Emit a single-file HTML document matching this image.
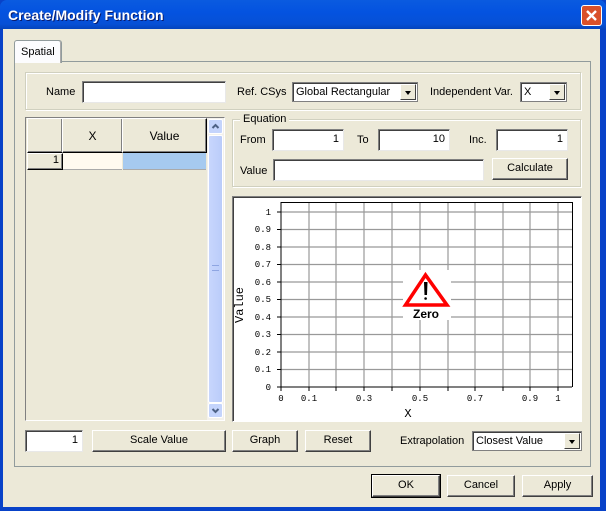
<!DOCTYPE html>
<html><head><meta charset="utf-8"><style>
*{box-sizing:border-box;margin:0;padding:0}
body{width:606px;height:511px;overflow:hidden;background:#0842C8;font-family:"Liberation Sans",sans-serif;font-size:11px;color:#000;position:relative}
.a{position:absolute}
.win{left:3px;top:29px;width:597px;height:478px;background:#ECE9D8}
.title{left:0;top:0;width:606px;height:30px;background:linear-gradient(#0A5BE0,#0453E0 40%,#0650D6 80%,#0441B8);border-radius:7px 7px 0 0}
.tt{left:8px;top:7px;color:#fff;font-weight:bold;font-size:14px;font-family:"Liberation Sans",sans-serif;text-shadow:1px 1px #0a1c6c}
.close{left:581px;top:5px;width:21px;height:21px;background:#D9502A;border:1px solid #fff;border-radius:3px}
.inp{background:#fff;border:1px solid;border-color:#808080 #e8e8e8 #e8e8e8 #808080;box-shadow:inset 1px 1px #404040;text-align:right;padding:3px 4px 0 0;font-size:11px}
.btn2{background:#ECE9D8;border:1px solid;border-color:#fff #404040 #404040 #fff;box-shadow:inset -1px -1px #808080;text-align:center}
.grp{border:1px solid #D0D0BF;box-shadow:1px 1px #fff, inset 1px 1px #fff}
.combo{background:#fff;border:1px solid #808080;box-shadow:inset 1px 1px #404040;padding:3px 0 0 3px;white-space:nowrap}
.arr{position:absolute;right:1px;top:1px;bottom:1px;width:16px;background:#ECE9D8;border:1px solid;border-color:#fff #404040 #404040 #fff}
.arr:after{content:"";position:absolute;left:4px;top:6px;border:3px solid transparent;border-top:4px solid #000;border-bottom:0}
</style></head><body>
<div class="a title"></div>
<div class="a tt">Create/Modify Function</div>
<div class="a close"><svg width="19" height="19"><path d="M5 5L14 14M14 5L5 14" stroke="#fff" stroke-width="2.4"/></svg></div>
<div class="a win"></div>
<div class="a" style="left:14px;top:61px;width:577px;height:406px;border:1px solid #919B9C;background:#F7F6F0"></div>
<div class="a" style="left:15px;top:62px;width:575px;height:404px;background:#ECE9D8"></div>
<div class="a" style="left:14px;top:40px;width:48px;height:23px;border:1px solid #919B9C;border-bottom:none;background:#FCFCFE;border-radius:3px 3px 0 0;box-shadow:inset -1px 0 #aaa"></div>
<div class="a" style="left:21px;top:46px">Spatial</div>
<div class="a grp" style="left:25px;top:72px;width:556px;height:38px"></div>
<div class="a" style="left:46px;top:86px">Name</div>
<div class="a inp" style="left:82px;top:81px;width:144px;height:22px"></div>
<div class="a" style="left:237px;top:86px">Ref. CSys</div>
<div class="a combo" style="left:292px;top:82px;width:126px;height:20px">Global Rectangular<div class="arr"></div></div>
<div class="a" style="left:430px;top:86px">Independent Var.</div>
<div class="a combo" style="left:520px;top:82px;width:47px;height:20px">X<div class="arr"></div></div>
<div class="a" style="left:25px;top:117px;width:200px;height:304px;border:1px solid;border-color:#808080 #fff #fff #808080;background:#ECE9D8"></div>
<div class="a btn2" style="left:27px;top:118px;width:36px;height:35px;border-color:#fff #000 #000 #fff"></div>
<div class="a btn2" style="left:62px;top:118px;width:61px;height:35px;border-color:#fff #000 #000 #fff;font-size:12px;padding-top:10px">X</div>
<div class="a btn2" style="left:122px;top:118px;width:85px;height:35px;border-color:#fff #000 #000 #fff;font-size:12px;padding-top:10px">Value</div>
<div class="a btn2" style="left:27px;top:153px;width:36px;height:17px;border-color:#fff #000 #000 #fff;text-align:right;padding-right:3px;font-size:11px">1</div>
<div class="a" style="left:63px;top:153px;width:59px;height:17px;background:#FFFAF0;border-bottom:1px solid #aaa"></div>
<div class="a" style="left:123px;top:153px;width:83px;height:17px;background:#A6CAF0;border-bottom:1px solid #aaa"></div>
<div class="a" style="left:207px;top:118px;width:17px;height:302px;background:#F3F1EC"></div>
<div class="a" style="left:208px;top:119px;width:15px;height:15px;background:#C4D4FC;border:1px solid #fff;border-radius:2px"><svg width="13" height="13"><path d="M3.5 8L6.5 5L9.5 8" stroke="#4D6185" stroke-width="2" fill="none"/></svg></div>
<div class="a" style="left:208px;top:135px;width:15px;height:268px;background:linear-gradient(90deg,#C8D6FC,#BACCFA);border:1px solid #fff;border-radius:2px"></div>
<div class="a" style="left:212px;top:265px;width:7px;height:6px;border-top:1px solid #8EA5E2;border-bottom:1px solid #8EA5E2"></div>
<div class="a" style="left:208px;top:403px;width:15px;height:15px;background:#C4D4FC;border:1px solid #fff;border-radius:2px"><svg width="13" height="13"><path d="M3.5 5L6.5 8L9.5 5" stroke="#4D6185" stroke-width="2" fill="none"/></svg></div>
<div class="a grp" style="left:232px;top:119px;width:349px;height:68px"></div>
<div class="a" style="left:240px;top:113px;background:#ECE9D8;padding:0 3px">Equation</div>
<div class="a" style="left:240px;top:134px">From</div>
<div class="a inp" style="left:272px;top:129px;width:72px;height:22px">1</div>
<div class="a" style="left:357px;top:134px">To</div>
<div class="a inp" style="left:378px;top:129px;width:72px;height:22px">10</div>
<div class="a" style="left:469px;top:134px">Inc.</div>
<div class="a inp" style="left:496px;top:129px;width:72px;height:22px">1</div>
<div class="a" style="left:240px;top:165px">Value</div>
<div class="a inp" style="left:273px;top:159px;width:211px;height:22px"></div>
<div class="a btn2" style="left:492px;top:158px;width:76px;height:22px;line-height:19px">Calculate</div>
<div class="a" style="left:232px;top:196px;width:350px;height:226px;background:#fff;border:1px solid;border-color:#808080 #fff #fff #808080;box-shadow:inset 1px 1px #404040"></div>
<svg class="a" style="left:0;top:0" width="606" height="511">
<g stroke="#999" stroke-width="1.2" fill="none">
<path d="M309 202V387M336 202V387M364 202V387M392 202V387M420 202V387M448 202V387M475 202V387M503 202V387M530 202V387M558 202V387"/>
<path d="M281 212H572M281 229.5H572M281 247H572M281 264.5H572M281 282H572M281 299.5H572M281 317H572M281 334.5H572M281 352H572M281 369.5H572"/>
</g>
<path d="M281 202.5H572.5V387M281 202V387H572" stroke="#000" fill="none"/>
<g stroke="#000"><path d="M277 212H281M277 229.5H281M277 247H281M277 264.5H281M277 282H281M277 299.5H281M277 317H281M277 334.5H281M277 352H281M277 369.5H281M277 387H281"/>
<path d="M281 387V391M309 387V391M336 387V391M364 387V391M392 387V391M420 387V391M448 387V391M475 387V391M503 387V391M530 387V391M558 387V391"/></g>
<g font-family="Liberation Mono,monospace" font-size="9" text-anchor="end">
<text x="271" y="215">1</text><text x="271" y="232">0.9</text><text x="271" y="250">0.8</text><text x="271" y="267">0.7</text><text x="271" y="285">0.6</text><text x="271" y="302">0.5</text><text x="271" y="320">0.4</text><text x="271" y="337">0.3</text><text x="271" y="355">0.2</text><text x="271" y="372">0.1</text><text x="271" y="390">0</text>
</g>
<g font-family="Liberation Mono,monospace" font-size="9" text-anchor="middle">
<text x="281" y="401">0</text><text x="309" y="401">0.1</text><text x="364" y="401">0.3</text><text x="420" y="401">0.5</text><text x="475" y="401">0.7</text><text x="530" y="401">0.9</text><text x="558" y="401">1</text>
<text x="408" y="417" font-size="12">X</text>
<text x="0" y="0" font-size="12" transform="translate(243 305) rotate(-90)">Value</text>
</g>
<rect x="403" y="270" width="48" height="50" fill="#fff"/>
<path d="M425.5 275L405.5 305H447Z" fill="none" stroke="#f00" stroke-width="3.5"/>
<path d="M424 282h3.5l-.5 13h-2.5z" fill="#000"/><circle cx="425.6" cy="298.5" r="1.3" fill="#000"/>
<text x="426" y="318" font-family="Liberation Sans,sans-serif" font-weight="bold" font-size="12" text-anchor="middle">Zero</text>
</svg>
<div class="a inp" style="left:25px;top:430px;width:58px;height:22px">1</div>
<div class="a btn2" style="left:92px;top:430px;width:134px;height:22px;line-height:19px">Scale Value</div>
<div class="a btn2" style="left:232px;top:430px;width:66px;height:22px;line-height:19px">Graph</div>
<div class="a btn2" style="left:305px;top:430px;width:66px;height:22px;line-height:19px">Reset</div>
<div class="a" style="left:400px;top:435px">Extrapolation</div>
<div class="a combo" style="left:472px;top:431px;width:110px;height:20px">Closest Value<div class="arr"></div></div>
<div class="a btn2" style="left:372px;top:475px;width:68px;height:22px;line-height:19px;outline:1px solid #000">OK</div>
<div class="a btn2" style="left:447px;top:475px;width:68px;height:22px;line-height:19px">Cancel</div>
<div class="a btn2" style="left:522px;top:475px;width:71px;height:22px;line-height:19px">Apply</div>
</body></html>
